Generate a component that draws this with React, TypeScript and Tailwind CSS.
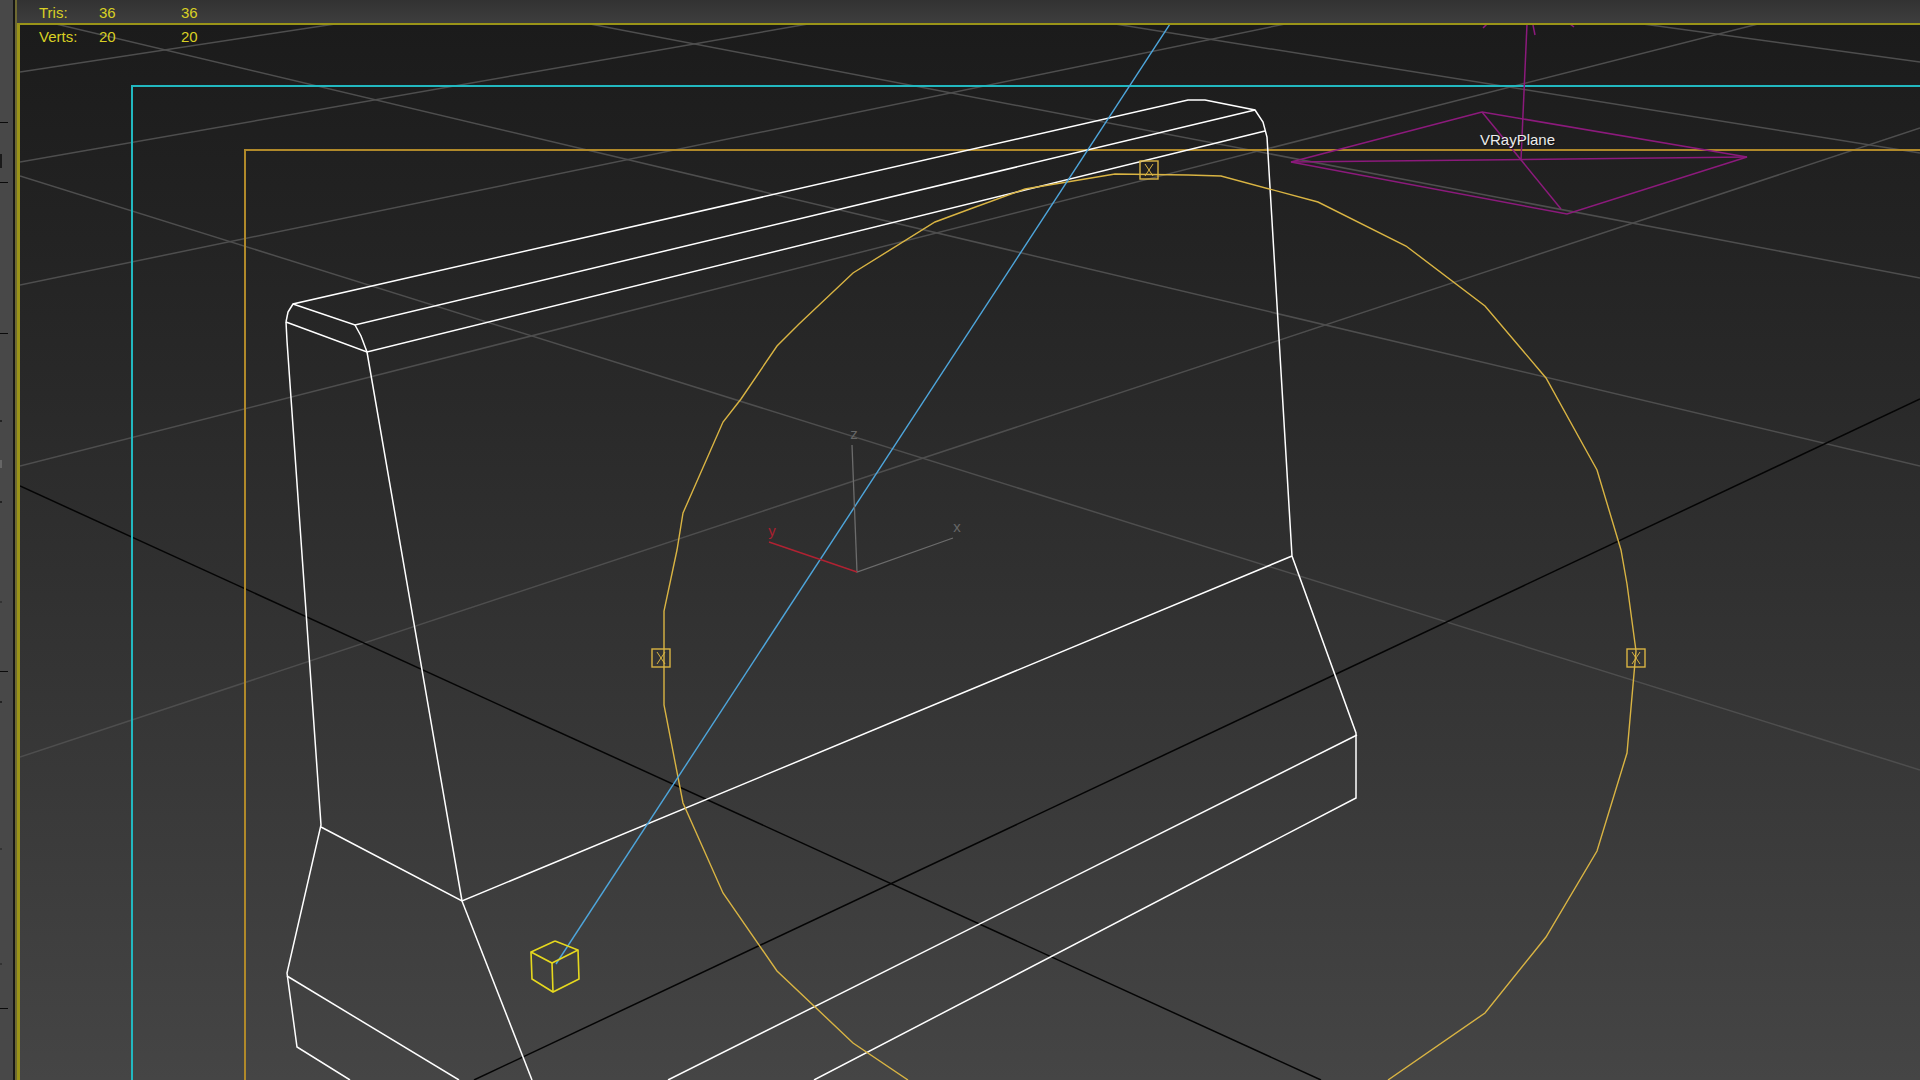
const gridLines = [
  "20,72 335,24",
  "20,162 808,24",
  "20,285 1285,24",
  "20,466 1758,24",
  "20,757 1920,128",
  "56,24 1920,466",
  "590,24 1920,278",
  "1115,24 1920,153",
  "1643,24 1920,62",
  "20,176 1920,770",
];

const wireLines = [
  // top rail
  "286,322 288,312 293,304 1188,100 1205,100 1255,110 1263,122 1267,137 1292,556 1356,733 1356,798 814,1080",
  "293,304 355,325 1255,110",
  "286,322 367,352 1265,131",
  "355,325 361,336 367,352 462,901",
  // left side and base
  "286,322 287,341 321,825 287,973 297,1047 350,1080",
  "321,827 462,901 1292,556",
  "287,976 459,1080",
  "462,901 532,1080",
  "1357,735 668,1080",
];

const circle =
  "908,1080 853,1043 814,1006 777,971 723,893 683,803 664,705 664,611 677,550 683,513 723,422 741,399 777,346 799,324 853,273 935,222 970,209 1025,189 1115,174 1188,175 1221,176 1318,202 1406,246 1485,306 1546,378 1597,470 1621,550 1627,584 1636,651 1627,753 1597,851 1546,937 1485,1013 1388,1080";

const plane = [
  "1482,112 1747,157 1567,214 1291,162 1482,112",
  "1291,162 1747,157",
  "1482,112 1561,209",
  "1527,24 1521,160",
  "1483,28 1487,24",
  "1535,35 1533,25",
  "1574,27 1570,24",
];

const cube = [
  "555,941 578,950 579,979 553,992 532,979 531,952 555,941",
  "531,952 552,963 578,950",
  "552,963 553,992",
];

// light handles on the circle
const Handle = ({ x, y }: { x: number; y: number }) => (
  <g stroke="#d9b443" fill="none">
    <rect x={x - 9} y={y - 9} width="18" height="18" strokeWidth="1.4" />
    <path d={`M${x - 4} ${y - 6}L${x + 4} ${y + 6}M${x + 4} ${y - 6}L${x - 4} ${y + 6}`} strokeWidth="1" />
  </g>
);

const Viewport = () => (
  <svg viewBox="20 25 1900 1055" className="block h-full w-full">
    <g fill="none" strokeWidth="1.3">
      <g stroke="#4e4e4e" strokeWidth="1.5">
        {gridLines.map((p) => (
          <polyline key={p} points={p} />
        ))}
      </g>
      <polyline points="20,486 1321,1080" stroke="#050505" strokeWidth="1.5" />
      <polyline points="474,1080 1920,399" stroke="#050505" strokeWidth="1.5" />

      <polyline points="132,1080 132,86 1920,86" stroke="#22b8c0" strokeWidth="2" />
      <polyline points="245,1080 245,150 1920,150" stroke="#b0892a" strokeWidth="2" />

      <g stroke="#ffffff" strokeWidth="1.5">
        {wireLines.map((p) => (
          <polyline key={p} points={p} />
        ))}
      </g>

      <g stroke="#8c1a7c" strokeWidth="1.5">
        {plane.map((p) => (
          <polyline key={p} points={p} />
        ))}
      </g>

      <polyline points={circle} stroke="#d9b443" strokeWidth="1.4" />

      <polyline points="1170,24 556,964" stroke="#4ea6dc" strokeWidth="1.4" />

      <g stroke="#e6d81e" strokeWidth="1.6">
        {cube.map((p) => (
          <polyline key={p} points={p} />
        ))}
      </g>

      {/* axis tripod */}
      <polyline points="852,445 857,572 953,538" stroke="#6c6c6c" />
      <polyline points="769,542 857,572" stroke="#b02232" strokeWidth="1.5" />
    </g>

    <Handle x={1149} y={170} />
    <Handle x={661} y={658} />
    <Handle x={1636} y={658} />

    <g fontFamily="'Liberation Sans', sans-serif" fontSize="15" textAnchor="middle">
      <text x="854" y="439" fill="#666666">z</text>
      <text x="957" y="532" fill="#666666">x</text>
      <text x="772" y="536" fill="#a82030">y</text>
    </g>
  </svg>
);

const App = () => {
  return (
    <div className="flex h-screen w-screen overflow-hidden bg-[#444444] font-['Liberation_Sans',sans-serif]">
      {/* left rail with its ticks */}
      <div className="flex w-[13px] flex-col bg-[#484848]">
        <div className="mt-[122px] h-px w-2 bg-[#0a0a0a]" />
        <div className="mt-[31px] h-[14px] w-[2px] bg-[#1a1a1a]" />
        <div className="mt-[14px] h-px w-2 bg-[#0a0a0a]" />
        <div className="mt-[150px] h-px w-2 bg-[#0a0a0a]" />
        <div className="mt-[86px] h-[2px] w-[2px] bg-[#222222]" />
        <div className="mt-[38px] h-2 w-[2px] bg-[#666666]" />
        <div className="mt-[33px] h-[2px] w-[2px] bg-[#222222]" />
        <div className="mt-[98px] h-[2px] w-[2px] bg-[#333333]" />
        <div className="mt-[68px] h-px w-2 bg-[#0a0a0a]" />
        <div className="mt-[29px] h-[2px] w-[2px] bg-[#222222]" />
        <div className="mt-[145px] h-[2px] w-[2px] bg-[#333333]" />
        <div className="mt-[113px] h-[2px] w-[2px] bg-[#333333]" />
        <div className="mt-[43px] h-px w-2 bg-[#0a0a0a]" />
      </div>
      <div className="w-[2px] bg-[#161616]" />

      <div className="relative flex flex-1 flex-col border-l-2 border-[#6f6a32]">
        <div className="h-[23px] bg-gradient-to-b from-[#323232] to-[#3e3e3e]" />
        <div className="relative flex-1 border-l-[3px] border-t-2 border-[#9a9418] bg-gradient-to-b from-[#1b1b1b] to-[#454545]">
          <Viewport />
          <span className="absolute left-[1460px] top-[105px] text-[15px] leading-5 text-[#ececec] [text-shadow:1px_1px_0_#111111]">
            VRayPlane
          </span>
        </div>

        {/* stats overlay */}
        <div className="absolute left-[22px] top-[1px] grid grid-cols-[60px_82px_30px] text-[15px] leading-6 text-[#d8d024]">
          <span>Tris:</span>
          <span>36</span>
          <span>36</span>
          <span>Verts:</span>
          <span>20</span>
          <span>20</span>
        </div>
      </div>
    </div>
  );
};

export default App;
